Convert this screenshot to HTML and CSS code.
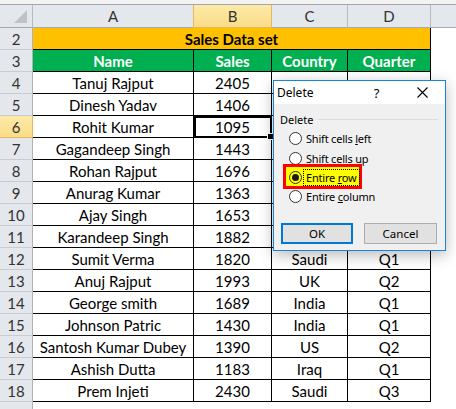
FILE: index.html
```html
<!DOCTYPE html>
<html lang="en">
<head>
    <meta charset="UTF-8">
    <meta name="viewport" content="width=device-width, initial-scale=1.0">
    <title>Sales Data set</title>
    <link rel="stylesheet" href="styles.css">
</head>
<body>
  <div id="main">
    <div class="topbar"></div>
    <div class="sheet">
      <!-- column headers -->
      <div class="ch corner"><span class="tri"></span></div>
      <div class="ch">A</div>
      <div class="ch hi">B</div>
      <div class="ch">C</div>
      <div class="ch">D</div>
      <div class="ch last"></div>

      <div class="rh">2</div>
      <div class="c title-row">Sales Data set</div>
      <div class="e"></div>

      <div class="rh">3</div>
      <div class="c head">Name</div>
      <div class="c head">Sales</div>
      <div class="c head">Country</div>
      <div class="c head">Quarter</div>
      <div class="e"></div>

      <!-- C and D of rows 4-11 sit under the dialog -->
      <div class="rh">4</div><div class="c">Tanuj Rajput</div><div class="c">2405</div><div class="c"></div><div class="c"></div><div class="e"></div>
      <div class="rh">5</div><div class="c">Dinesh Yadav</div><div class="c">1406</div><div class="c"></div><div class="c"></div><div class="e"></div>
      <div class="rh hi">6</div><div class="c">Rohit Kumar</div><div class="c sel">1095</div><div class="c"></div><div class="c"></div><div class="e"></div>
      <div class="rh">7</div><div class="c">Gagandeep Singh</div><div class="c">1443</div><div class="c"></div><div class="c"></div><div class="e"></div>
      <div class="rh">8</div><div class="c">Rohan Rajput</div><div class="c">1696</div><div class="c"></div><div class="c"></div><div class="e"></div>
      <div class="rh">9</div><div class="c">Anurag Kumar</div><div class="c">1363</div><div class="c"></div><div class="c"></div><div class="e"></div>
      <div class="rh">10</div><div class="c">Ajay Singh</div><div class="c">1653</div><div class="c"></div><div class="c"></div><div class="e"></div>
      <div class="rh">11</div><div class="c">Karandeep Singh</div><div class="c">1882</div><div class="c"></div><div class="c"></div><div class="e"></div>
      <div class="rh">12</div><div class="c">Sumit Verma</div><div class="c">1820</div><div class="c">Saudi</div><div class="c">Q1</div><div class="e"></div>
      <div class="rh">13</div><div class="c">Anuj Rajput</div><div class="c">1993</div><div class="c">UK</div><div class="c">Q2</div><div class="e"></div>
      <div class="rh">14</div><div class="c">George smith</div><div class="c">1689</div><div class="c">India</div><div class="c">Q1</div><div class="e"></div>
      <div class="rh">15</div><div class="c">Johnson Patric</div><div class="c">1430</div><div class="c">India</div><div class="c">Q1</div><div class="e"></div>
      <div class="rh">16</div><div class="c">Santosh Kumar Dubey</div><div class="c">1390</div><div class="c">US</div><div class="c">Q2</div><div class="e"></div>
      <div class="rh">17</div><div class="c">Ashish Dutta</div><div class="c">1183</div><div class="c">Iraq</div><div class="c">Q1</div><div class="e"></div>
      <div class="rh">18</div><div class="c">Prem Injeti</div><div class="c">2430</div><div class="c">Saudi</div><div class="c">Q3</div><div class="e"></div>
      <div class="rh"></div><div class="e"></div><div class="e"></div><div class="e"></div><div class="e"></div><div class="e"></div>
    </div>

    <div class="dialog">
      <div class="titlebar">
        <span class="dlg-title">Delete</span>
        <span class="help">?</span>
        <span class="close">
          <svg width="11" height="11" viewBox="0 0 11 11"><path d="M0.5 0.5 L10.5 10.5 M10.5 0.5 L0.5 10.5" stroke="#000" stroke-width="1.1" fill="none"/></svg>
        </span>
      </div>
      <div class="dlg-body">
        <div class="group"><span>Delete</span><span class="line"></span></div>
        <div class="radios">
          <label class="opt"><span class="radio"></span><span class="txt">Shift cells <u>l</u>eft</span></label>
          <label class="opt"><span class="radio"></span><span class="txt">Shift cells <u>u</u>p</span></label>
          <label class="opt marked"><span class="radio on"></span><span class="txt focus">Entire <u>r</u>ow</span></label>
          <label class="opt"><span class="radio"></span><span class="txt">Entire <u>c</u>olumn</span></label>
        </div>
        <div class="buttons">
          <button class="btn ok">OK</button>
          <button class="btn">Cancel</button>
        </div>
      </div>
    </div>
  </div>
</body>
</html>
```

FILE: styles.css
```css
body {
  margin: 0;
  font-family: Lato, "Open Sans", sans-serif;
  background: #fff;
}
#main {
  position: relative;
  width: 456px;
  height: 409px;
  overflow: hidden;
}
.topbar {
  height: 4px;
  background: #f3f3f3;
  border-bottom: 1px solid #a2a5a9;
}
.sheet {
  display: grid;
  grid-template-columns: 33px 161px 78px 76px 83px 1fr;
  grid-template-rows: 23px;
  grid-auto-rows: 22px;
  font-size: 15px;
  color: #000;
}
.sheet > div {
  box-sizing: border-box;
  display: flex;
  align-items: center;
  justify-content: center;
}
.ch {
  background: #e4e7eb;
  border-right: 1px solid #b7babe;
  border-bottom: 1px solid #a6a9ad;
  color: #333;
}
.ch.last {
  border-right: none;
}
.corner {
  position: relative;
}
.tri {
  position: absolute;
  right: 5px;
  bottom: 4px;
  width: 0;
  height: 0;
  border-left: 13px solid transparent;
  border-bottom: 13px solid #bfc3c8;
}
.ch.hi, .rh.hi {
  background: linear-gradient(#fdeaa8, #f9dc88);
  border-color: #e6b85c;
}
.ch.hi {
  border-left: 1px solid #e6b85c;
  margin-left: -1px;
}
.rh {
  background: #e4e7eb;
  border-right: 1px solid #aeb1b5;
  border-bottom: 1px solid #c8cbcf;
  color: #333;
}
.c {
  border-right: 1px solid #000;
  border-bottom: 1px solid #000;
  white-space: nowrap;
}
.title-row {
  grid-column: span 4;
  background: #ffc000;
  font-weight: bold;
}
.head {
  background: #00b050;
  color: #fff;
  font-weight: bold;
}
.sel {
  position: relative;
  outline: 2px solid #000;
  outline-offset: -2px;
}
.sel::after {
  content: "";
  position: absolute;
  right: -3px;
  bottom: -3px;
  width: 5px;
  height: 5px;
  background: #000;
  border: 1px solid #fff;
}

/* dialog */
.dialog {
  position: absolute;
  left: 273px;
  top: 80px;
  width: 173px;
  height: 171px;
  box-sizing: border-box;
  border: 1px solid #1883d7;
  background: #f0f0f0;
  box-shadow: 0 4px 14px rgba(0, 0, 0, 0.28);
  font-family: "Noto Sans", "Open Sans", sans-serif;
  font-size: 11px;
  color: #000;
  display: flex;
  flex-direction: column;
}
.titlebar {
  height: 23px;
  background: #fff;
  display: flex;
  align-items: center;
  padding-left: 3px;
  font-size: 12px;
}
.dlg-title {
  flex: 1;
}
.help {
  width: 45px;
  text-align: center;
  font-size: 13px;
}
.close {
  width: 46px;
  display: flex;
  justify-content: center;
}
.dlg-body {
  padding-top: 8px;
}
.group {
  height: 14px;
  display: flex;
  align-items: center;
  padding-left: 6px;
}
.group .line {
  flex: 1;
  height: 1px;
  background: #dcdcdc;
  margin: 0 7px 0 5px;
}
.radios {
  margin-top: 3px;
}
.opt {
  position: relative;
  height: 19.4px;
  display: flex;
  align-items: center;
  padding-left: 15px;
  letter-spacing: -0.2px;
}
.opt > * {
  position: relative;
}
.radio {
  width: 13px;
  height: 13px;
  box-sizing: border-box;
  border: 1px solid #333;
  border-radius: 50%;
  background: #fff;
  display: flex;
  align-items: center;
  justify-content: center;
  margin-right: 1px;
}
.radio.on {
  background: transparent;
}
.radio.on::after {
  content: "";
  width: 7px;
  height: 7px;
  border-radius: 50%;
  background: #1a1a1a;
}
.txt {
  padding: 0 2px;
  line-height: 15px;
  border: 1px solid transparent;
}
.txt.focus {
  border: 1px dotted #000;
}
.marked::before {
  content: "";
  position: absolute;
  left: 9px;
  top: -4px;
  width: 79px;
  height: 25px;
  box-sizing: border-box;
  border: 3px solid #ff0000;
  background: #ffff00;
}
.buttons {
  display: flex;
  gap: 11px;
  padding-left: 7px;
  margin-top: 16px;
}
.btn {
  width: 73px;
  height: 21px;
  box-sizing: border-box;
  background: #e1e1e1;
  border: 1px solid #adadad;
  font-family: "Noto Sans", "Open Sans", sans-serif;
  font-size: 11.5px;
  color: #000;
  padding: 0;
}
.btn.ok {
  width: 72px;
  border: 2px solid #0078d7;
}
```
